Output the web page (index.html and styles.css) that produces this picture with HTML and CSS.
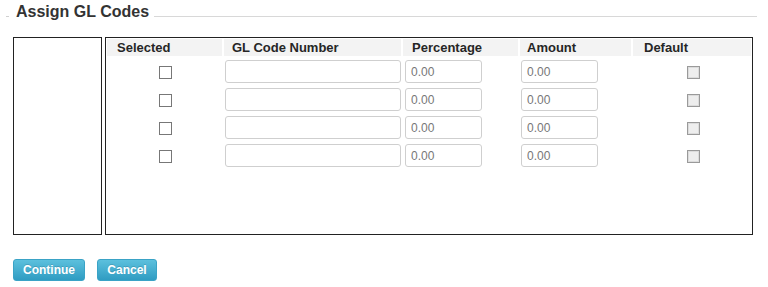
FILE: index.html
```html
<!DOCTYPE html>
<html>
<head>
<meta charset="utf-8">
<link rel="stylesheet" href="styles.css">
</head>
<body>
<div class="page">
  <div class="section-head">
    <span class="rule-start"></span>
    <h2 class="title">Assign GL Codes</h2>
    <span class="rule"></span>
  </div>
  <div class="panels">
    <div class="side-box"></div>
    <div class="main-box">
      <div class="grid">
        <div class="th">Selected</div>
        <div class="th">GL Code Number</div>
        <div class="th">Percentage</div>
        <div class="th">Amount</div>
        <div class="th th-default">Default</div>

        <div class="td center"><input type="checkbox" class="chk"></div>
        <div class="td"><input type="text" class="txt gl"></div>
        <div class="td"><input type="text" class="txt num pct" value="0.00"></div>
        <div class="td"><input type="text" class="txt num amt" value="0.00"></div>
        <div class="td center dflt"><input type="checkbox" class="chk dis" disabled></div>

        <div class="td center"><input type="checkbox" class="chk"></div>
        <div class="td"><input type="text" class="txt gl"></div>
        <div class="td"><input type="text" class="txt num pct" value="0.00"></div>
        <div class="td"><input type="text" class="txt num amt" value="0.00"></div>
        <div class="td center dflt"><input type="checkbox" class="chk dis" disabled></div>

        <div class="td center"><input type="checkbox" class="chk"></div>
        <div class="td"><input type="text" class="txt gl"></div>
        <div class="td"><input type="text" class="txt num pct" value="0.00"></div>
        <div class="td"><input type="text" class="txt num amt" value="0.00"></div>
        <div class="td center dflt"><input type="checkbox" class="chk dis" disabled></div>

        <div class="td center"><input type="checkbox" class="chk"></div>
        <div class="td"><input type="text" class="txt gl"></div>
        <div class="td"><input type="text" class="txt num pct" value="0.00"></div>
        <div class="td"><input type="text" class="txt num amt" value="0.00"></div>
        <div class="td center dflt"><input type="checkbox" class="chk dis" disabled></div>
      </div>
    </div>
  </div>
  <div class="actions">
    <button class="btn btn-continue">Continue</button>
    <button class="btn btn-cancel">Cancel</button>
  </div>
</div>
</body>
</html>
```

FILE: styles.css
```css
* { box-sizing: border-box; }
html, body { margin: 0; padding: 0; background: #fff; }
body { font-family: "Liberation Sans", Arial, sans-serif; color: #333; }

.page { width: 768px; height: 287px; padding: 2px 11px 0 6px; }

.section-head { display: flex; align-items: flex-start; height: 20px; }
.rule-start { width: 3px; height: 1px; margin-top: 14px; background: #d0d0d0; }
.title { margin: 0; padding: 0 5px 0 7px; font-size: 16px; line-height: 20px; font-weight: bold; color: #333; }
.rule { flex: 1; height: 1px; margin-top: 14px; background: #d8d8d8; }

.panels { display: flex; gap: 3px; margin: 15px 0 0 7px; height: 198px; }
.side-box { width: 89px; border: 1px solid #222; }
.main-box { width: 648px; border: 1px solid #222; padding: 1px; }

.grid {
  display: grid;
  grid-template-columns: 115px 177px 115px 111px 118px;
  column-gap: 2px;
  grid-auto-rows: 28px;
  grid-template-rows: 21px;
}
.th {
  height: 17px;
  background: #f3f3f3;
  font-size: 13px;
  font-weight: bold;
  line-height: 17px;
  color: #262626;
  padding-left: 9px;
}
.th:first-child { padding-left: 10px; }
.th:nth-child(2) { padding-left: 8px; }
.th:nth-child(4) { padding-left: 7px; }
.th-default { padding-left: 11px; }

.td { display: flex; align-items: flex-start; }
.center { justify-content: center; }

.txt {
  height: 23px;
  margin: 0;
  border: 1px solid #cfcfcf;
  border-radius: 3px;
  background: #fff;
  font-family: "Liberation Sans", Arial, sans-serif;
  font-size: 12px;
  color: #777;
  padding: 0 5px;
  outline: none;
}
.gl { width: 176px; margin-left: 1px; }
.pct { width: 77px; margin-left: 2px; }
.amt { width: 77px; margin-left: 1px; }

.chk {
  -webkit-appearance: none;
  appearance: none;
  width: 13px;
  height: 13px;
  margin: 6px 0 0 1px;
  border: 1px solid #777;
  background: #fff;
  border-radius: 0;
}
.dflt { padding-left: 1px; }
.chk.dis {
  border: 1px solid #9a9a9a;
  background: #eee;
  box-shadow: inset 0 0 0 1px #dcdcdc;
}

.actions { display: flex; gap: 12px; margin: 24px 0 0 7px; }
.btn {
  height: 22px;
  padding: 0 8px;
  border: 1px solid #3aa3c6;
  border-radius: 3px;
  background: linear-gradient(#5cc0dd, #2f9cc2);
  color: #fff;
  font-family: "Liberation Sans", Arial, sans-serif;
  font-size: 12px;
  font-weight: bold;
  line-height: 20px;
  text-shadow: 0 -1px 0 rgba(0,0,0,0.15);
}
.btn-continue { width: 72px; }
.btn-cancel { width: 60px; }
```
